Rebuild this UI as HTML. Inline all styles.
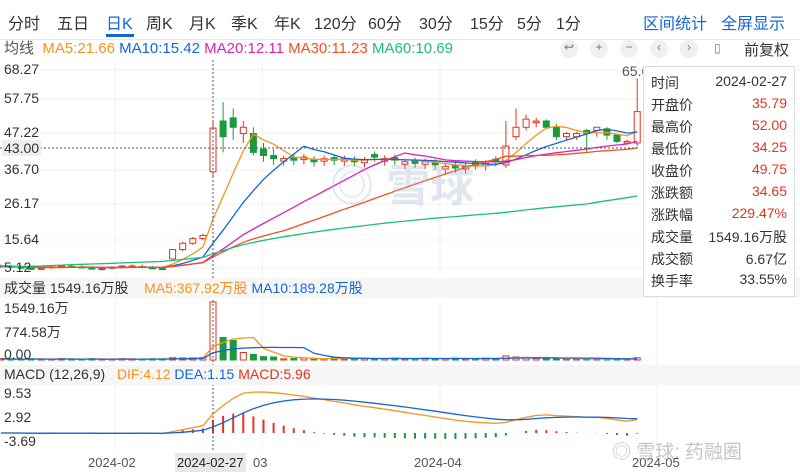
<!DOCTYPE html>
<html><head><meta charset="utf-8"><style>
*{margin:0;padding:0;box-sizing:border-box}
body{width:800px;height:473px;overflow:hidden;background:#fff;font-family:"Liberation Sans","Noto Sans CJK SC",sans-serif;position:relative;color:#333}
.tabs{position:absolute;left:0;top:0;width:800px;height:40px;border-bottom:1px solid #e8e8e8}
.tabs span{position:absolute;top:10px;font-size:16px;color:#333}
.abs{position:absolute;white-space:nowrap}
.lbl{position:absolute;font-size:14px;color:#333;left:4px}
.tip{position:absolute;left:643px;top:66px;width:152px;height:231px;background:rgba(255,255,255,.93);border:1px solid #ddd;font-size:14px}
.tip div{position:absolute;left:7px;right:7px;height:20px}
.tip b{font-weight:normal;position:absolute;left:0}
.tip i{font-style:normal;position:absolute;right:0;color:#e4331f}
</style></head><body>
<div class="tabs">
<span style="left:8px">分时</span><span style="left:57px">五日</span><span style="left:106px;color:#1565d8">日K</span><span style="left:146px">周K</span><span style="left:189px">月K</span><span style="left:231px">季K</span><span style="left:274px">年K</span><span style="left:314px">120分</span><span style="left:368px">60分</span><span style="left:419px">30分</span><span style="left:470px">15分</span><span style="left:517px">5分</span><span style="left:556px">1分</span>
<span style="left:643px;color:#1565d8">区间统计</span><span style="left:721px;color:#1565d8">全屏显示</span>
<div style="position:absolute;left:106px;top:34px;width:28px;height:3px;background:#1565d8"></div>
</div>
<div class="abs" style="left:4px;top:39px;font-size:15px;line-height:19px"><span style="color:#555">均线</span>&nbsp; <span style="color:#f7931e">MA5:21.66</span> <span style="color:#1565d8">MA10:15.42</span> <span style="color:#e020b8">MA20:12.11</span> <span style="color:#f4511e">MA30:11.23</span> <span style="color:#1bbf7a">MA60:10.69</span></div>
<div class="abs" style="left:560px;top:42px;font-size:12px;color:#777">
<span class="abs" style="left:0;top:-2px;width:18px;height:18px;border-radius:9px;background:#f0f0f0;text-align:center">↩</span>
<span class="abs" style="left:30px;top:-2px;width:18px;height:18px;border-radius:9px;background:#f0f0f0;text-align:center">+</span>
<span class="abs" style="left:60px;top:-2px;width:18px;height:18px;border-radius:9px;background:#f0f0f0;text-align:center">−</span>
<span class="abs" style="left:90px;top:-2px;width:18px;height:18px;border-radius:9px;background:#f0f0f0;text-align:center">‹</span>
<span class="abs" style="left:120px;top:-2px;width:18px;height:18px;border-radius:9px;background:#f0f0f0;text-align:center">›</span>
<span class="abs" style="left:154px;top:-1px">▯</span>
<span class="abs" style="left:184px;top:-3px;font-size:15px;color:#333">前复权</span>
</div>
<svg id="s" width="800" height="473" style="position:absolute;left:0;top:0"></svg>
<div class="lbl" style="top:61px">68.27</div>
<div class="lbl" style="top:90px">57.75</div>
<div class="lbl" style="top:124px">47.22</div>
<div class="lbl" style="top:140px;background:#eee;padding:0 2px;left:2px">43.00</div>
<div class="lbl" style="top:161px">36.70</div>
<div class="lbl" style="top:195px">26.17</div>
<div class="lbl" style="top:231px">15.64</div>
<div class="lbl" style="top:259px">5.12</div>
<div class="abs" style="left:0;top:278px;width:800px;height:20px;background:#f6f6f6"></div>
<div class="abs" style="left:4px;top:278px;font-size:14px"><span>成交量 1549.16万股</span>&nbsp;&nbsp;&nbsp; <span style="color:#f7931e">MA5:367.92万股</span> <span style="color:#1565d8">MA10:189.28万股</span></div>
<div class="lbl" style="top:298px">1549.16万</div>
<div class="lbl" style="top:322px">774.58万</div>
<div class="lbl" style="top:346px">0.00</div>
<div class="abs" style="left:0;top:365px;width:800px;height:20px;background:#f6f6f6"></div>
<div class="abs" style="left:4px;top:366px;font-size:14px"><span>MACD (12,26,9)</span>&nbsp;&nbsp; <span style="color:#f7931e">DIF:4.12</span> <span style="color:#1565d8">DEA:1.15</span> <span style="color:#e4331f">MACD:5.96</span></div>
<div class="lbl" style="top:385px">9.53</div>
<div class="lbl" style="top:409px">2.92</div>
<div class="lbl" style="top:433px">-3.69</div>
<div class="abs" style="left:88px;top:455px;font-size:13px;color:#555">2024-02</div>
<div class="abs" style="left:175px;top:453px;font-size:13px;background:#e8e8e8;padding:2px 2px;color:#222">2024-02-27</div>
<div class="abs" style="left:253px;top:455px;font-size:13px;color:#555">03</div>
<div class="abs" style="left:414px;top:455px;font-size:13px;color:#555">2024-04</div>
<div class="abs" style="left:632px;top:455px;font-size:13px;color:#555">2024-05</div>
<div class="abs" style="left:330px;top:150px;font-size:44px;color:rgba(170,185,205,.35);font-weight:bold">◎ 雪球</div>
<div class="abs" style="left:612px;top:437px;font-size:19px;color:rgba(150,150,150,.55)">◎ 雪球: 药融圈</div>
<div class="abs" style="left:622px;top:63px;font-size:14px;color:#555">65.6</div>
<div class="tip">
<div style="top:6px"><b>时间</b><i style="color:#333">2024-02-27</i></div>
<div style="top:28px"><b>开盘价</b><i>35.79</i></div>
<div style="top:50px"><b>最高价</b><i>52.00</i></div>
<div style="top:72px"><b>最低价</b><i>34.25</i></div>
<div style="top:94px"><b>收盘价</b><i>49.75</i></div>
<div style="top:116px"><b>涨跌额</b><i>34.65</i></div>
<div style="top:138px"><b>涨跌幅</b><i>229.47%</i></div>
<div style="top:160px"><b>成交量</b><i style="color:#333">1549.16万股</i></div>
<div style="top:182px"><b>成交额</b><i style="color:#333">6.67亿</i></div>
<div style="top:204px"><b>换手率</b><i style="color:#333">33.55%</i></div>
</div>
<script>
var s=document.getElementById('s'),h='';
function P(p){return 70+(68.27-p)*3.135}
[70,99,133,170,204,240,268].forEach(function(y){h+='<line x1="0" x2="800" y1="'+y+'" y2="'+y+'" stroke="#f0f0f0"/>'});
[115,262,440,657].forEach(function(x){h+='<line x1="'+x+'" x2="'+x+'" y1="60" y2="450" stroke="#f0f0f0"/>'});
var d=[];
for(var i=0;i<18;i++){var b=5.3+Math.sin(i)*0.4;d.push([b,b+0.6,b-0.5,b+Math.cos(i)*0.3,25+10*Math.sin(i*2)])}
d.push([8,11,7.8,11,60],[11,13.5,10.5,13,55],[13,15,12.5,14.5,60],[14.5,16,14,15.5,70]);
d.push([35.79,52,34.25,49.75,1549]);
d.push([52,58,42,47,600],[53,56,46,50,520],[48,52,45,50,200],[48,50,41,42,150],[43,45,39,41,90],[41,43,38,40,80]);
var m=[40,39.5,40.5,39,40,39.5,40,39,39.5,40.5,40,39.5,39,38.5,39,38,37.5,37,37.5,38,38.5,39];
m.forEach(function(c,k){var o=c+(k%2?0.8:-0.8);d.push([o,Math.max(o,c)+1,Math.min(o,c)-1.5,c,30+(k%3)*10])});
d.push([38,52,37,44,110],[47,56,46,50,80],[50,54,49,52.6,70],[51.5,53,50,52,40],[52,52.5,50,50,50],[50,51,46,47,40],[47,48.5,46,48,30],[47,48.5,46,48,30],[49,49.5,42,48,25],[49,50,47,50,30],[49.5,50,46,47.5,25],[47.5,48,45,45.5,20],[45,46,44.5,45.5,20],[45,65.6,44,55,60]);
var X=function(i){return 213+(i-22)*10.1};
var cl=d.map(function(a){return a[3]});
function ma(arr,n){return arr.map(function(_,i){var s=0,c=0;for(var j=Math.max(0,i-n+1);j<=i;j++){s+=arr[j];c++}return s/c})}
function line(vals,fy,col,st){var p='';vals.forEach(function(v,i){var x=X(i);if(i>=st&&x>=0)p+=(p?'L':'M')+x.toFixed(1)+','+fy(v).toFixed(1)});return '<path d="'+p+'" fill="none" stroke="'+col+'" stroke-width="1.3"/>'}
d.forEach(function(a,i){var x=X(i);if(x<0)return;var up=a[3]>=a[0],col=up?'#e4331f':'#1a9a3a';
var t=P(Math.max(a[0],a[3])),bt=P(Math.min(a[0],a[3]));if(bt-t<1)bt=t+1;
h+='<line x1="'+x+'" x2="'+x+'" y1="'+P(a[1])+'" y2="'+t+'" stroke="'+col+'"/><line x1="'+x+'" x2="'+x+'" y1="'+bt+'" y2="'+P(a[2])+'" stroke="'+col+'"/>';
h+='<rect x="'+(x-3)+'" y="'+t+'" width="6" height="'+(bt-t)+'" fill="'+(up?'#fff':col)+'" stroke="'+col+'"/>';
var vy=360-a[4]/1549*58;h+='<rect x="'+(x-3)+'" y="'+vy+'" width="6" height="'+(360-vy)+'" fill="'+(up?'#fff':col)+'" stroke="'+col+'"/>';});
h+=line(ma(cl,5),P,'#f7931e',0)+line(ma(cl,10),P,'#1565d8',0)+line(ma(cl,20),P,'#e020b8',0)+line(ma(cl,30),P,'#f4511e',0)+line(ma(cl,60).map(function(v,i){return v*0.55+5*0.45+i*0.12}),P,'#1bbf7a',0);
var vol=d.map(function(a){return a[4]});var VY=function(v){return 360-v/1549*58};
h+=line(ma(vol,5),VY,'#f7931e',0)+line(ma(vol,10),VY,'#1565d8',0);
function ema(a,n){var k=2/(n+1),r=[],e=a[0];a.forEach(function(v){e=e+(v-e)*k;r.push(e)});return r}
var e12=ema(cl,12),e26=ema(cl,26),dif=e12.map(function(v,i){return v-e26[i]}),dea=ema(dif,9);
var mx=Math.max.apply(null,dif),MY=function(v){return 433-v*(41/mx)};
dif.forEach(function(v,i){var x=X(i);if(x<0)return;var mc=2*(v-dea[i]);h+='<line x1="'+x+'" x2="'+x+'" y1="433" y2="'+MY(mc*0.5)+'" stroke="'+(mc>=0?'#e4331f':'#1a9a3a')+'" stroke-width="2"/>'});
h+=line(dif,MY,'#f7931e',0)+line(dea,MY,'#1565d8',0);
h+='<line x1="0" x2="640" y1="148" y2="148" stroke="#555" stroke-dasharray="2,2"/><line x1="213" x2="213" y1="60" y2="452" stroke="#555" stroke-dasharray="2,2"/>';
s.innerHTML=h;
</script>
</body></html>
